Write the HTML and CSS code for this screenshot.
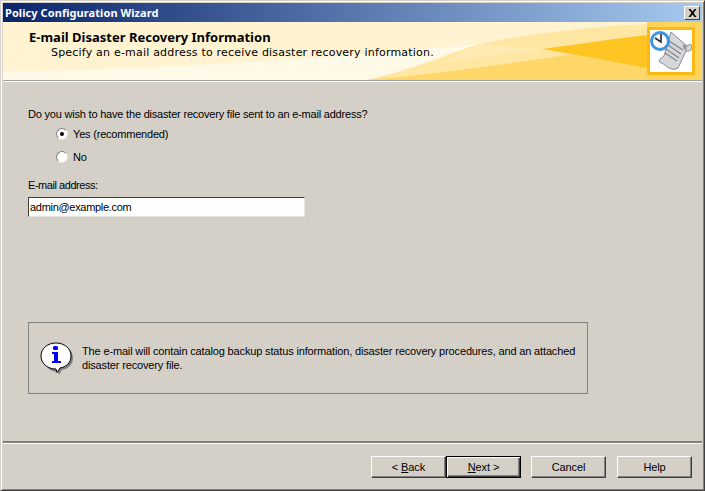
FILE: index.html
```html
<!DOCTYPE html>
<html lang="en">
<head>
<meta charset="utf-8">
<title>Policy Configuration Wizard</title>
<link rel="stylesheet" href="styles.css">
</head>
<body>
<div class="window">
  <div class="titlebar">
    <span class="title-text">Policy Configuration Wizard</span>
    <button class="close" type="button" aria-label="Close">
      <svg width="9" height="8" viewBox="0 0 9 8"><path d="M0.5 0h2l2 2.6L6.5 0h2L5.6 4l2.9 4h-2l-2-2.6L2.5 8h-2l2.9-4z" fill="#000"/></svg>
    </button>
  </div>
  <header class="banner">
    <svg class="banner-art" width="699" height="58" viewBox="0 0 699 58">
      <rect width="699" height="58" fill="#fff3d2"/>
      <path d="M0 50C160 46 340 36 477 22C430 35 400 50 364 58H0Z" fill="#fff9e8"/>
      <path d="M364 58C420 45 450 30 477 22C520 12 600 2 699 0V58Z" fill="#ffe6a3"/>
      <path d="M364 58C460 50 580 30 699 14V58Z" fill="#ffd768"/>
      <path d="M477 22L540 27L440 40Z" fill="#ffeab2"/>
      <path d="M540 27C590 20 640 12 699 8V58C650 46 590 36 540 27Z" fill="#ffc522"/>
      <path d="M644 0H699V58H644Z" fill="#ffd45a"/>
    </svg>
    <div class="banner-text">
      <div class="banner-title">E-mail Disaster Recovery Information</div>
      <div class="banner-sub">Specify an e-mail address to receive disaster recovery information.</div>
    </div>
    <div class="banner-icon">
      <svg width="42" height="42" viewBox="0 0 42 42">
        <path d="M21 2L37 16Q42 12 42 18Q41 22 36 21L28 38Q24 41 19 38L12 33Q8 33 10 29L14 26Z" fill="#d5d7db" stroke="#8a8d92" stroke-width="1"/>
        <path d="M36 21Q32 18 33 14L37 16" fill="#9a9da2"/>
        <path d="M19 11L33 20M18 15L31 24M16 19L29 28M15 23L27 31" stroke="#84878c" stroke-width="1.3" fill="none"/>
        <circle cx="10" cy="11" r="8.5" fill="#fbfbfb" stroke="#3d94e2" stroke-width="3"/>
        <path d="M11 4V12L5 8" fill="none" stroke="#2b2b2b" stroke-width="1.6"/>
      </svg>
    </div>
  </header>
  <main class="content">
    <p class="question">Do you wish to have the disaster recovery file sent to an e-mail address?</p>
    <div class="option">
      <span class="radio radio-on"></span><span>Yes (recommended)</span>
    </div>
    <div class="option option-no">
      <span class="radio"></span><span>No</span>
    </div>
    <label class="email-label">E-mail address:</label>
    <div class="email-field">admin@example.com</div>
    <div class="notice">
      <svg class="notice-icon" width="33" height="33" viewBox="0 0 33 33">
        <path d="M18 3C26 3 33 8 33 16C33 23 28 27 22 28L19 33L18 30C9 30 4 23 4 16C4 8 10 3 18 3Z" fill="#808080"/>
        <path d="M16 1C24 1 31 6 31 14C31 21 26 25 20 26L17 30.5L16 27C7 27 1 21 1 14C1 6 8 1 16 1Z" fill="#fff" stroke="#000" stroke-width="1"/>
        <rect x="13" y="4" width="5" height="4" rx="1.5" fill="#0000ff"/>
        <path d="M12 10h6v9h3v2h-9v-2h2v-7h-2z" fill="#0000ff"/>
      </svg>
      <p class="notice-text">The e-mail will contain catalog backup status information, disaster recovery procedures, and an attached<br>disaster recovery file.</p>
    </div>
  </main>
  <footer class="footer">
    <button class="btn" type="button">&lt; <u>B</u>ack</button>
    <button class="btn btn-default" type="button"><u>N</u>ext &gt;</button>
    <button class="btn btn-cancel" type="button">Cancel</button>
    <button class="btn btn-help" type="button">Help</button>
  </footer>
</div>
</body>
</html>
```
FILE: styles.css
```css
* { box-sizing: border-box; }
html, body { margin: 0; padding: 0; }
body { width: 705px; height: 491px; overflow: hidden; background: #d4d0c8; font-family: "Liberation Sans", Arial, sans-serif; font-size: 11px; letter-spacing: -0.2px; color: #000; }
.window {
  width: 705px; height: 491px; display: flex; flex-direction: column;
  background: #d4d0c8; padding: 2px;
  border: 1px solid; border-color: #d4d0c8 #404040 #404040 #d4d0c8;
  box-shadow: inset 1px 1px 0 #fff, inset -1px -1px 0 #808080;
}
.titlebar {
  height: 19px; flex: none; display: flex; align-items: center; justify-content: space-between;
  padding: 0 2px 0 2px;
  background: linear-gradient(90deg, #0a246a, #a6caf0);
  color: #fff;
}
.title-text { font-family: "Noto Sans", sans-serif; font-weight: 700; font-size: 11px; letter-spacing: 0.07px; }
.close {
  width: 16px; height: 14px; padding: 0; display: flex; align-items: center; justify-content: center;
  background: #d4d0c8; border: 1px solid; border-color: #fff #404040 #404040 #fff;
}
.banner {
  height: 59px; flex: none; position: relative; display: flex; justify-content: space-between; align-items: flex-start;
  background: #fff3d2;
  border-bottom: 1px solid #a0a0a0; box-shadow: 0 1px 0 #fff;
  padding: 5px 7px 0 26px;
}
.banner-art { position: absolute; left: 0; top: 0; }
.banner-text { position: relative; padding-top: 2px; }
.banner-title { font-family: "Noto Sans", sans-serif; font-weight: 700; font-size: 13px; line-height: 16px; letter-spacing: 0; }
.banner-sub { font-family: "DejaVu Sans", sans-serif; font-size: 11px; line-height: 16px; margin-left: 22px; letter-spacing: 0.2px; }
.banner-icon {
  width: 48px; height: 48px; position: relative; background: #fff; border: 3px solid #fdb913;
  display: flex; align-items: center; justify-content: center;
}
.content { flex: 1; padding: 26px 0 0 25px; }
.question { margin: 0; line-height: 14px; }
.option { display: flex; align-items: center; gap: 5px; height: 14px; margin: 6px 0 0 28px; }
.option-no { margin-top: 9px; }
.radio {
  width: 12px; height: 12px; border-radius: 50%; background: #fff; flex: none; position: relative;
  border: 1px solid; border-color: #808080 #e8e6e0 #e8e6e0 #808080;
}
.radio-on::after {
  content: ""; position: absolute; left: 3px; top: 3px; width: 4px; height: 4px; border-radius: 50%; background: #000;
}
.email-label { display: block; margin-top: 14px; line-height: 14px; letter-spacing: -0.45px; }
.email-field {
  width: 277px; height: 20px; margin-top: 5px; background: #fff; padding: 2px 1px; line-height: 14px; letter-spacing: -0.3px;
  border: 1px solid; border-color: #404040 #e8e6e0 #e8e6e0 #404040;
}
.notice {
  width: 560px; height: 72px; margin-top: 105px; display: flex; align-items: center; gap: 9px;
  border: 1px solid #808080; padding: 0 0 0 11px;
}
.notice-text { margin: 0; line-height: 14px; letter-spacing: -0.15px; white-space: nowrap; }
.notice-icon { flex: none; }
.footer {
  height: 47px; flex: none; display: flex; align-items: flex-start; padding: 13px 0 0 368px;
  border-top: 2px solid #808080; box-shadow: inset 0 1px 0 #fff;
}
.btn {
  width: 75px; height: 22px; padding: 0; background: #d4d0c8; font: 11px "Liberation Sans", Arial, sans-serif; letter-spacing: -0.1px; color: #000;
  border: 1px solid; border-color: #fff #404040 #404040 #fff; box-shadow: inset -1px -1px 0 #808080;
}
.btn-default { border: 1px solid #000; box-shadow: inset 1px 1px 0 #fff, inset -1px -1px 0 #404040, inset -2px -2px 0 #808080; }
.btn-cancel { margin-left: 10px; }
.btn-help { margin-left: 11px; }
```
